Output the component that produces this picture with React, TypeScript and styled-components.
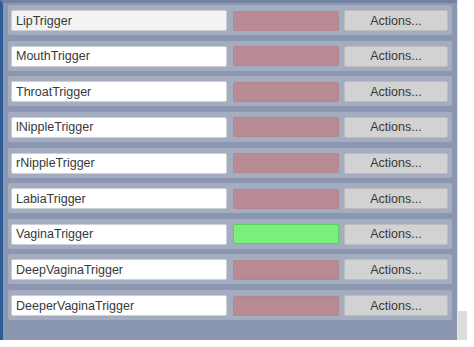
import { styled, createGlobalStyle } from 'styled-components';

const GlobalStyle = createGlobalStyle`
  html, body {
    margin: 0;
    padding: 0;
    background: #ffffff;
    font-family: "Liberation Sans", Arial, sans-serif;
  }
`;

const Page = styled.div`
  display: flex;
  width: 474px;
  height: 347px;
  overflow: hidden;
`;

const Panel = styled.div`
  width: 457px;
  height: 340px;
  flex-shrink: 0;
  background-color: #8b96b0;
  border-left: 3px solid #2d5d98;
  border-top: 3px solid #7182a2;
  padding: 2px 0 0 5px;
  box-sizing: border-box;
  display: flex;
  flex-direction: column;
  gap: 5.625px;
`;

const Side = styled.div`
  width: 17px;
  height: 340px;
  display: flex;
  flex-direction: column;
  justify-content: flex-end;
  border-left: 1px solid #e4e6ea;
`;

const ScrollStub = styled.div`
  width: 9px;
  height: 29px;
  background: #dcdcdc;
`;

const Row = styled.div`
  width: 444px;
  height: 30px;
  flex-shrink: 0;
  box-sizing: border-box;
  padding: 1px 4px 0 3px;
  display: flex;
  align-items: center;
  background-color: #a4acbf;
  border-radius: 2px;
`;

const NameField = styled.div<{ $focused?: boolean }>`
  width: 216px;
  height: 21px;
  box-sizing: border-box;
  background: ${(p) => (p.$focused ? '#f3f3f3' : '#ffffff')};
  border: 1px solid #cdd0d8;
  border-radius: 2px;
  padding-left: 4px;
  display: flex;
  align-items: center;
  font-size: 12.5px;
  color: #383838;
`;

const State = styled.div<{ $active?: boolean }>`
  width: 106px;
  height: 20px;
  margin-left: 6px;
  box-sizing: border-box;
  border-radius: 2px;
  background: ${(p) => (p.$active ? '#7af07a' : '#b88a94')};
  border: 1px solid ${(p) => (p.$active ? '#5cd05c' : '#b08690')};
`;

const ActionButton = styled.div`
  width: 104px;
  height: 21px;
  margin-left: 5px;
  box-sizing: border-box;
  border-radius: 2px;
  background: #d2d2d2;
  border: 1px solid #bdbdbd;
  display: flex;
  align-items: center;
  justify-content: center;
  font-size: 12.5px;
  color: #383838;
`;

const triggers = [
  { name: 'LipTrigger', active: false },
  { name: 'MouthTrigger', active: false },
  { name: 'ThroatTrigger', active: false },
  { name: 'lNippleTrigger', active: false },
  { name: 'rNippleTrigger', active: false },
  { name: 'LabiaTrigger', active: false },
  { name: 'VaginaTrigger', active: true },
  { name: 'DeepVaginaTrigger', active: false },
  { name: 'DeeperVaginaTrigger', active: false },
];

export default function App() {
  return (
    <Page>
      <GlobalStyle />
      <Panel>
        {triggers.map((t, i) => (
          <Row key={t.name}>
            <NameField $focused={i === 0}>{t.name}</NameField>
            <State $active={t.active} />
            <ActionButton>Actions...</ActionButton>
          </Row>
        ))}
      </Panel>
      <Side>
        <ScrollStub />
      </Side>
    </Page>
  );
}
